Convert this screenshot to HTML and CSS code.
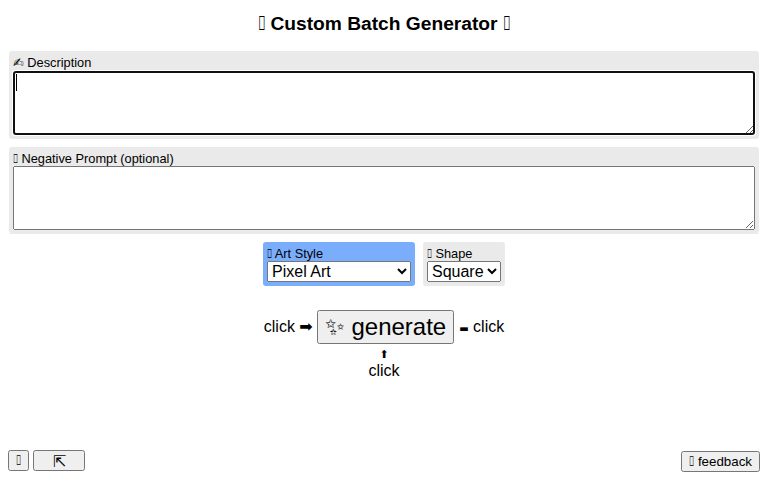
FILE: index.html
```html
<!DOCTYPE html>
<html lang="en">
<head>
  <meta charset="UTF-8">
  <meta name="viewport" content="width=device-width, initial-scale=1.0">
  <title>Custom Batch Generator</title>
  <link rel="stylesheet" href="styles.css">
</head>
<body>
  <h3 class="page-title"><span class="tofu">&#xE000;</span> Custom Batch Generator <span class="tofu">&#xE000;</span></h3>

  <!-- Prompts -->
  <div class="field-box">
    <label for="description" class="label label-tall"><span class="glyph">✍&#xFE0E;</span> Description</label>
    <textarea id="description" autofocus></textarea>
    <span class="caret"></span>
  </div>
  <div class="field-box">
    <label for="negative" class="label"><span class="tofu">&#xE000;</span> Negative Prompt (optional)</label>
    <textarea id="negative"></textarea>
  </div>

  <!-- Style and shape pickers -->
  <div class="picker-row">
    <div class="picker picker-active">
      <label for="art-style" class="label"><span class="tofu">&#xE000;</span> Art Style</label>
      <select id="art-style"><option>Pixel Art</option><option>Watercolor Painting</option></select>
    </div>
    <div class="picker">
      <label for="shape" class="label"><span class="tofu">&#xE000;</span> Shape</label>
      <select id="shape"><option>Square</option><option>Wide</option></select>
    </div>
  </div>

  <!-- Generate button -->
  <div class="generate-row">
    <span>click <span class="glyph arrow">➡&#xFE0E;</span></span>
    <button type="button" class="generate-btn"><span class="glyph">✨&#xFE0E;</span> generate</button>
    <span><span class="glyph dash">▬</span> click</span>
  </div>
  <div class="generate-hint">
    <span class="hint-arrow glyph">⬆&#xFE0E;</span>
    <span>click</span>
  </div>

  <!-- Bottom bar -->
  <div class="bottom-bar">
    <button type="button" class="small-btn"><span class="tofu">&#xE000;</span></button>
    <button type="button" class="small-btn expand-btn">⇱</button>
    <button type="button" class="small-btn feedback-btn"><span class="tofu">&#xE000;</span> feedback</button>
  </div>
</body>
</html>
```

FILE: styles.css
```css
/* Body and global layout */
html, body {
  height: 100%;
}

body {
  font-family: "Liberation Sans", sans-serif;
  margin: 0;
  padding: 0 8px 8px;
  box-sizing: border-box;
  display: flex;
  flex-direction: column;
  color: black;
  background: white;
}

.page-title {
  margin: 13px 0 16px;
  font-size: 19.2px;
  line-height: 22px;
  text-align: center;
}

/* Emoji with no font: Noto Sans has the empty box, squeezed to the narrow one */
.tofu {
  display: inline-block;
  font-family: "Noto Sans", sans-serif;
  font-weight: normal;
  line-height: 1;
  letter-spacing: -0.22em;
  transform: scaleX(0.65);
  transform-origin: left;
}

/* Text-style symbols */
.glyph {
  font-family: "DejaVu Sans", sans-serif;
}

/* Prompt boxes */
.field-box {
  position: relative;
  margin: 0 1px 8px;
  padding: 4px;
  background: #eaeaea;
  border-radius: 3px;
}

.label {
  display: block;
  font-size: 12.8px;
}

.label-tall {
  padding-bottom: 1px;
}

.field-box textarea {
  display: block;
  width: 100%;
  height: 64px;
  box-sizing: border-box;
  margin: 0;
}

/* Text cursor in the focused box */
.caret {
  position: absolute;
  left: 7px;
  top: 23px;
  width: 1px;
  height: 17px;
  background: black;
}

/* Pickers */
.picker-row {
  display: flex;
  justify-content: center;
  gap: 8px;
}

.picker {
  padding: 4px;
  background: #eaeaea;
  border-radius: 3px;
}

.picker-active {
  background: #7aadfb;
}

.picker select {
  display: block;
  font-size: 16px;
  font-family: "Liberation Sans", sans-serif;
}

#art-style {
  width: 144px;
}

/* Generate */
.generate-row {
  display: flex;
  justify-content: center;
  align-items: center;
  gap: 4px;
  margin-top: 24px;
  font-size: 16px;
}

.generate-btn {
  font-family: "Liberation Sans", sans-serif;
  font-size: 24px;
  padding: 1px 6px;
  height: 34px;
}

.arrow {
  line-height: 1;
}

.dash {
  font-size: 10px;
  line-height: 1;
  margin-left: 1px;
}

.generate-hint {
  display: flex;
  flex-direction: column;
  align-items: center;
  font-size: 16px;
  line-height: 18px;
  margin-top: 4px;
}

.hint-arrow {
  font-size: 11px;
  line-height: 14px;
}

/* Bottom bar */
.bottom-bar {
  margin-top: auto;
  display: flex;
  align-items: flex-start;
  gap: 4px;
}

.small-btn {
  font-family: "Liberation Sans", sans-serif;
  font-size: 13.33px;
  height: 21px;
  padding: 1px 6px;
}

.expand-btn {
  width: 52px;
  font-size: 16px;
  padding: 0 6px 4px;
}

.feedback-btn {
  margin-left: auto;
  margin-top: 1px;
}
```
